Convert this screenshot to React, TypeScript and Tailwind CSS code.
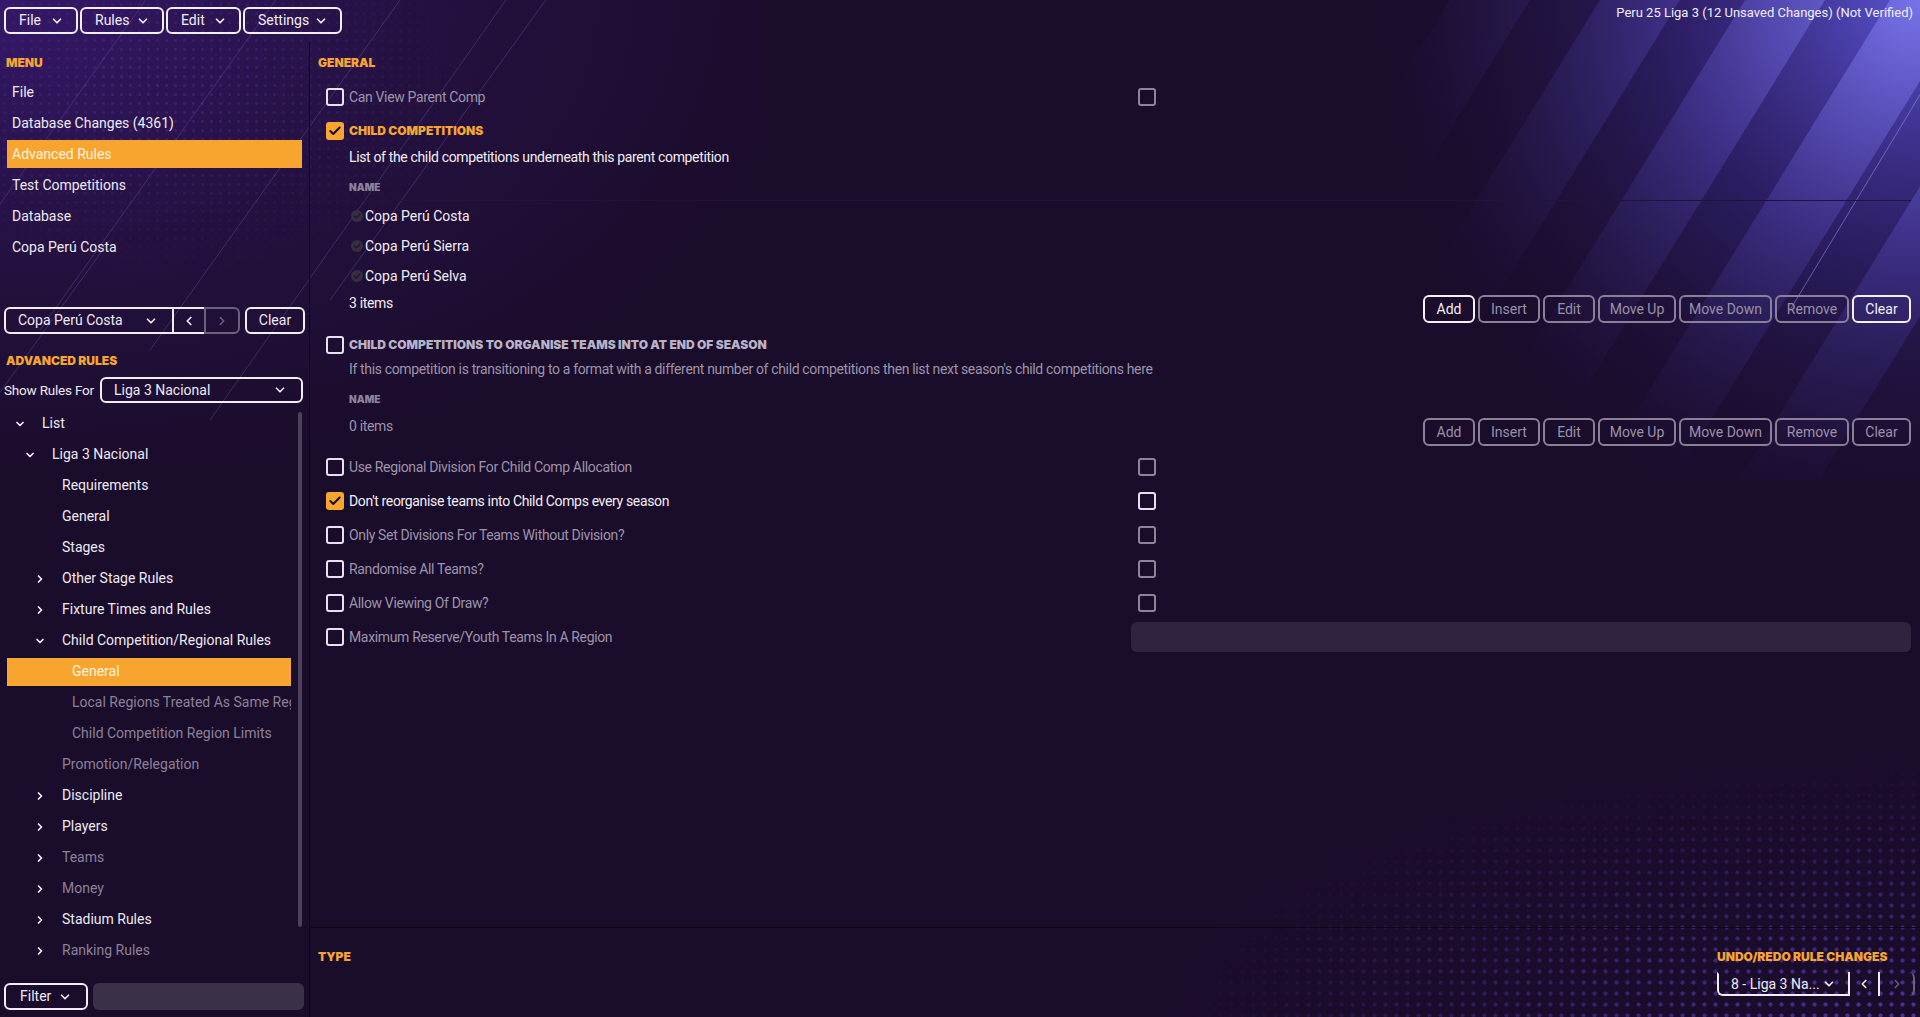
import { Check, ChevronDown, ChevronLeft, ChevronRight } from "lucide-react";

type TreeRow = { label: string; level: 0 | 1 | 2 | 3; chevron?: "down" | "right"; dim?: boolean; selected?: boolean };

const treeRows: TreeRow[] = [
  { label: "List", level: 0, chevron: "down" },
  { label: "Liga 3 Nacional", level: 1, chevron: "down" },
  { label: "Requirements", level: 2 },
  { label: "General", level: 2 },
  { label: "Stages", level: 2 },
  { label: "Other Stage Rules", level: 2, chevron: "right" },
  { label: "Fixture Times and Rules", level: 2, chevron: "right" },
  { label: "Child Competition/Regional Rules", level: 2, chevron: "down" },
  { label: "General", level: 3, selected: true },
  { label: "Local Regions Treated As Same Region", level: 3, dim: true },
  { label: "Child Competition Region Limits", level: 3, dim: true },
  { label: "Promotion/Relegation", level: 2, dim: true },
  { label: "Discipline", level: 2, chevron: "right" },
  { label: "Players", level: 2, chevron: "right" },
  { label: "Teams", level: 2, chevron: "right", dim: true },
  { label: "Money", level: 2, chevron: "right", dim: true },
  { label: "Stadium Rules", level: 2, chevron: "right" },
  { label: "Ranking Rules", level: 2, chevron: "right", dim: true },
  { label: "Misc", level: 2, chevron: "right", dim: true },
];

const indent = { 0: "pl-[7px]", 1: "pl-[17px]", 2: "pl-[27px]", 3: "pl-[37px]" };

const menuItems = ["File", "Database Changes (4361)", "Advanced Rules", "Test Competitions", "Database", "Copa Perú Costa"];

const listButtons = [
  { label: "Add", w: "w-[52px]" },
  { label: "Insert", w: "w-[62px]" },
  { label: "Edit", w: "w-[52px]" },
  { label: "Move Up", w: "w-[78px]" },
  { label: "Move Down", w: "w-[93px]" },
  { label: "Remove", w: "w-[74px]" },
  { label: "Clear", w: "w-[59px]" },
];

function Heading({ children }: { children: string }) {
  return <div className="h-[14px] whitespace-nowrap font-[Inter] text-[12px] font-black leading-[14px] tracking-normal text-[#f6a530]">{children}</div>;
}

function Box({ checked, bright }: { checked?: boolean; bright?: boolean }) {
  if (checked) {
    return (
      <span className="flex h-[18px] w-[18px] shrink-0 items-center justify-center rounded-[3px] bg-[#f8a630]">
        <Check size={14} strokeWidth={3.5} className="text-[#1a0c2b]" />
      </span>
    );
  }
  return <span className={`block h-[18px] w-[18px] shrink-0 rounded-[3px] border-2 ${bright ? "border-[#e6e1ec]" : "border-[#8e849c]"}`} />;
}

function DoneIcon() {
  return (
    <svg width="12" height="12" viewBox="0 0 12 12" className="shrink-0">
      <circle cx="6" cy="6" r="6" fill="#382e44" />
      <path d="M3.3 6.2 5.2 8 8.8 4.2" fill="none" stroke="#221830" strokeWidth="1.6" strokeLinecap="round" strokeLinejoin="round" />
    </svg>
  );
}

function SettingRow({ label, checked, white, valueChecked, valueBright }: { label: string; checked?: boolean; white?: boolean; valueChecked?: boolean; valueBright?: boolean }) {
  return (
    <div className="flex h-[18px] items-center">
      <div className="flex w-[805px] items-center gap-[5px]">
        <Box checked={checked} bright />
        <span className={white ? "text-[#f2eff5]" : "text-[#9d94aa]"}>{label}</span>
      </div>
      <div className="flex pl-[7px]">
        <Box checked={valueChecked} bright={valueBright} />
      </div>
    </div>
  );
}

function ListButtons({ active }: { active: boolean }) {
  return (
    <div className="flex gap-[3px] tracking-normal">
      {listButtons.map((b) => {
        const on = active && (b.label === "Add" || b.label === "Clear");
        return (
          <div
            key={b.label}
            className={`flex h-[28px] ${b.w} items-center justify-center rounded-[6px] border-2 ${on ? "border-[#f4f1f7] text-[#f4f1f7]" : "border-[#8a8097] text-[#9a91a7]"}`}
          >
            {b.label}
          </div>
        );
      })}
    </div>
  );
}

function Backdrop() {
  return (
    <div className="pointer-events-none absolute inset-0 overflow-hidden">
      <div className="absolute left-0 top-0 h-[460px] w-[760px] bg-[radial-gradient(ellipse_at_top_left,#35186a_0%,#24113f_40%,transparent_75%)]" />
      <div className="absolute left-0 top-0 h-[300px] w-[520px] bg-[radial-gradient(circle,#4a2a86_1.2px,transparent_1.8px)] bg-[length:9px_9px] opacity-60 [mask-image:radial-gradient(ellipse_at_30%_30%,black_0%,transparent_65%)]" />
      <svg className="absolute left-0 top-0" width="760" height="420" viewBox="0 0 760 420">
        <g stroke="#7b5bc0" strokeWidth="1" opacity="0.35">
          <line x1="-40" y1="260" x2="160" y2="-20" />
          <line x1="40" y1="330" x2="290" y2="-20" />
          <line x1="150" y1="350" x2="400" y2="0" />
          <line x1="210" y1="420" x2="520" y2="-20" />
          <line x1="330" y1="300" x2="560" y2="-20" />
          <line x1="-20" y1="420" x2="110" y2="240" />
        </g>
      </svg>
      <svg className="absolute right-0 top-0" width="560" height="480" viewBox="0 0 560 480">
        <defs>
          <radialGradient id="glowBase" cx="560" cy="0" r="560" gradientUnits="userSpaceOnUse">
            <stop offset="0" stopColor="#5e58dc" stopOpacity="0.95" />
            <stop offset="0.45" stopColor="#3b2c90" stopOpacity="0.55" />
            <stop offset="1" stopColor="#1a0c2b" stopOpacity="0" />
          </radialGradient>
          <radialGradient id="glowBand" cx="560" cy="0" r="540" gradientUnits="userSpaceOnUse">
            <stop offset="0" stopColor="#8582f4" stopOpacity="0.95" />
            <stop offset="0.5" stopColor="#5a4cc0" stopOpacity="0.45" />
            <stop offset="1" stopColor="#3a2a80" stopOpacity="0" />
          </radialGradient>
        </defs>
        <rect width="560" height="480" fill="url(#glowBase)" />
        {[90, 240, 385, 530, 675].map((o) => (
          <polygon key={o} points={`${o},0 ${o + 80},0 ${o + 80 - 296},480 ${o - 296},480`} fill="url(#glowBand)" opacity="0.7" />
        ))}
        <line x1="430" y1="310" x2="575" y2="70" stroke="#b0aaff" strokeWidth="1" opacity="0.45" />
      </svg>
      <div className="absolute bottom-0 right-0 h-[260px] w-[760px] bg-[radial-gradient(circle,#52309a_1.8px,transparent_2.4px)] bg-[length:11px_11px] [mask-image:radial-gradient(ellipse_at_bottom_right,black_0%,transparent_70%)]" />
    </div>
  );
}

export default function App() {
  return (
    <div className="relative h-[1017px] w-[1920px] overflow-hidden bg-[#1a0c2b] font-[Roboto] text-[14px] text-[#eeeaf2]">
      <Backdrop />
      <div className="relative flex h-full flex-col">
        <header className="flex h-[42px] shrink-0 justify-between pl-[4px] pr-[7px]">
          <nav className="flex gap-[2px] pt-[7px]">
            {[
              { label: "File", w: "w-[74px]" },
              { label: "Rules", w: "w-[84px]" },
              { label: "Edit", w: "w-[75px]" },
              { label: "Settings", w: "w-[99px]" },
            ].map((m) => (
              <div key={m.label} className={`flex h-[27px] ${m.w} items-center justify-between rounded-[6px] border-2 border-[#f1eef5] pl-[13px] pr-[12px] text-[#f1eef5]`}>
                <span>{m.label}</span>
                <ChevronDown size={14} strokeWidth={3} />
              </div>
            ))}
          </nav>
          <div className="pt-[5px] text-[13px] leading-[16px] text-[#f0eef8]">Peru 25 Liga 3 (12 Unsaved Changes) (Not Verified)</div>
        </header>

        <div className="flex min-h-0 flex-1">
          <aside className="flex w-[310px] shrink-0 flex-col border-r border-[#0c0615] pt-[14px]">
            <div className="pl-[6px]">
              <Heading>MENU</Heading>
            </div>
            <div className="mt-[8px] flex flex-col gap-[3px] px-[7px]">
              {menuItems.map((item) => (
                <div key={item} className={`h-[28px] px-[5px] leading-[28px] ${item === "Advanced Rules" ? "bg-[#f8a52f] text-[#fff3e0]" : ""}`}>
                  {item}
                </div>
              ))}
            </div>

            <div className="mt-[46px] flex h-[27px] px-[4px]">
              <div className="flex w-[170px] items-center justify-between rounded-l-[6px] border-2 border-[#f1eef5] pl-[12px] pr-[14px]">
                <span>Copa Perú Costa</span>
                <ChevronDown size={14} strokeWidth={3} />
              </div>
              <div className="-ml-[2px] flex w-[34px] items-center justify-center border-2 border-[#f1eef5]">
                <ChevronLeft size={14} strokeWidth={3} />
              </div>
              <div className="-ml-[2px] flex w-[36px] items-center justify-center rounded-r-[6px] border-2 border-[#6b6178] text-[#6b6178]">
                <ChevronRight size={14} strokeWidth={2.5} />
              </div>
              <div className="ml-[5px] flex w-[60px] items-center justify-center rounded-[6px] border-2 border-[#f1eef5]">Clear</div>
            </div>

            <div className="mt-[20px] pl-[6px]">
              <Heading>ADVANCED RULES</Heading>
            </div>
            <div className="mt-[9px] flex h-[26px] items-center pl-[4px]">
              <span className="w-[96px] whitespace-nowrap text-[13.5px] tracking-[-0.2px]">Show Rules For</span>
              <div className="flex h-[26px] w-[203px] items-center justify-between rounded-[6px] border-2 border-[#f1eef5] pl-[12px] pr-[14px]">
                <span>Liga 3 Nacional</span>
                <ChevronDown size={14} strokeWidth={3} />
              </div>
            </div>

            <div className="relative mt-[5px] h-[567px] overflow-hidden">
              {treeRows.map((row, i) => (
                <div key={i} className="flex h-[31px] items-center pl-[7px]">
                  <div className={`flex h-[28px] w-[284px] items-center overflow-hidden whitespace-nowrap ${indent[row.level]} ${row.selected ? "bg-[#f8a52f] text-[#fff3e0]" : row.dim ? "text-[#8c8298]" : "text-[#eeeaf2]"}`}>
                    <span className="flex w-[28px] shrink-0 text-[#f1eef5]">
                      {row.chevron === "down" && <ChevronDown size={12} strokeWidth={3.5} />}
                      {row.chevron === "right" && <ChevronRight size={12} strokeWidth={3.5} />}
                    </span>
                    <span>{row.label}</span>
                  </div>
                </div>
              ))}
              <div className="absolute left-[298px] top-[4px] h-[515px] w-[4px] rounded-full bg-[#4b4158]" />
            </div>

            <div className="mt-[8px] flex h-[27px] gap-[5px] px-[4px]">
              <div className="flex w-[84px] items-center justify-between rounded-[6px] border-2 border-[#f1eef5] pl-[14px] pr-[14px]">
                <span>Filter</span>
                <ChevronDown size={14} strokeWidth={3} />
              </div>
              <div className="w-[211px] rounded-[6px] bg-[#3a3048]" />
            </div>
          </aside>

          <main className="flex min-w-0 flex-1 flex-col">
            <section className="flex-1 border-b border-[#0c0615] pl-[8px] pr-[9px] pt-[14px] tracking-[-0.35px]">
              <Heading>GENERAL</Heading>
              <div className="ml-[8px] flex flex-col">
                <div className="mt-[18px]">
                  <SettingRow label="Can View Parent Comp" />
                </div>

                <div className="mt-[16px] flex h-[18px] items-center gap-[5px]">
                  <Box checked />
                  <span className="font-[Inter] text-[12px] font-black tracking-normal text-[#f6a530]">CHILD COMPETITIONS</span>
                </div>
                <div className="mt-[8px] pl-[23px] leading-[18px] text-[#f2eff5]">List of the child competitions underneath this parent competition</div>
                <div className="mt-[15px] h-[12px] pl-[23px] font-[Inter] text-[10px] font-black leading-[12px] tracking-normal text-[#8d8499]">NAME</div>
                <div className="mt-[7px] border-t border-[#20143a]">
                  {["Copa Perú Costa", "Copa Perú Sierra", "Copa Perú Selva"].map((c) => (
                    <div key={c} className="flex h-[30px] items-center gap-[2px] pl-[25px] tracking-normal text-[#f2eff5]">
                      <DoneIcon />
                      <span>{c}</span>
                    </div>
                  ))}
                </div>
                <div className="mt-[4px] flex items-start justify-between pl-[23px]">
                  <span className="leading-[16px] text-[#f2eff5]">3 items</span>
                  <ListButtons active />
                </div>

                <div className="mt-[13px] flex h-[18px] items-center gap-[5px]">
                  <Box bright />
                  <span className="font-[Inter] text-[12px] font-black tracking-normal text-[#b9b1c5]">CHILD COMPETITIONS TO ORGANISE TEAMS INTO AT END OF SEASON</span>
                </div>
                <div className="mt-[6px] pl-[23px] leading-[18px] text-[#9d94aa]">
                  If this competition is transitioning to a format with a different number of child competitions then list next season's child competitions here
                </div>
                <div className="mt-[15px] h-[12px] pl-[23px] font-[Inter] text-[10px] font-black leading-[12px] tracking-normal text-[#8d8499]">NAME</div>
                <div className="mt-[13px] flex items-start justify-between pl-[23px]">
                  <span className="leading-[16px] text-[#9d94aa]">0 items</span>
                  <ListButtons active={false} />
                </div>

                <div className="mt-[12px] flex flex-col gap-[16px]">
                  <SettingRow label="Use Regional Division For Child Comp Allocation" />
                  <SettingRow label="Don't reorganise teams into Child Comps every season" checked white valueBright />
                  <SettingRow label="Only Set Divisions For Teams Without Division?" />
                  <SettingRow label="Randomise All Teams?" />
                  <SettingRow label="Allow Viewing Of Draw?" />
                </div>
                <div className="mt-[10px] flex h-[30px] items-center">
                  <div className="flex w-[805px] items-center gap-[5px]">
                    <Box bright />
                    <span className="text-[#9d94aa]">Maximum Reserve/Youth Teams In A Region</span>
                  </div>
                  <div className="h-[30px] flex-1 rounded-[6px] bg-[#2f2340]" />
                </div>
              </div>
            </section>

            <section className="flex h-[89px] shrink-0 justify-between pl-[8px] pr-[5px] pt-[22px]">
              <Heading>TYPE</Heading>
              <div className="flex w-[198px] flex-col">
                <Heading>UNDO/REDO RULE CHANGES</Heading>
                <div className="mt-[8px] flex h-[24px]">
                  <div className="flex w-[131px] items-center justify-between rounded-bl-[6px] border-2 border-r-0 border-[#f1eef5] border-t-transparent pl-[12px] pr-[12px]">
                    <span>8 - Liga 3 Na...</span>
                    <ChevronDown size={14} strokeWidth={3} />
                  </div>
                  <div className="flex w-[32px] items-center justify-center border-x-2 border-[#f1eef5]">
                    <ChevronLeft size={14} strokeWidth={3} />
                  </div>
                  <div className="flex w-[35px] items-center justify-center rounded-r-[6px] border-r-2 border-[#6b6178] text-[#6b6178]">
                    <ChevronRight size={14} strokeWidth={2.5} />
                  </div>
                </div>
              </div>
            </section>
          </main>
        </div>
      </div>
    </div>
  );
}
